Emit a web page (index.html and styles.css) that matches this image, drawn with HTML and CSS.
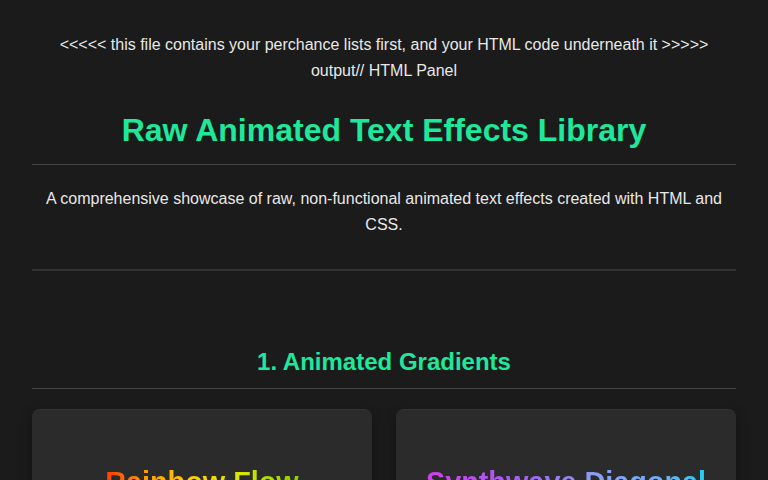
FILE: index.html
```html
<!DOCTYPE html>
<html lang="en">
<head>
<meta charset="utf-8">
<title>Raw Animated Text Effects Library</title>
<link rel="stylesheet" href="styles.css">
</head>
<body>
<div class="notice">
  <p>&lt;&lt;&lt;&lt;&lt; this file contains your perchance lists first, and your HTML code underneath it &gt;&gt;&gt;&gt;&gt;</p>
  <p>output// HTML Panel</p>
</div>
<header class="page-header">
  <h1 class="title">Raw Animated Text Effects Library</h1>
  <p class="intro">A comprehensive showcase of raw, non-functional animated text effects created with HTML and CSS.</p>
</header>
<section class="section">
  <h2 class="section-title">1. Animated Gradients</h2>
  <div class="grid">
    <div class="card">
      <div class="effect rainbow">Rainbow Flow</div>
    </div>
    <div class="card">
      <div class="effect synth">Synthwave Diagonal</div>
    </div>
  </div>
</section>
</body>
</html>
```
FILE: styles.css
```css
html, body {
  margin: 0;
  padding: 0;
  background: #1b1b1b;
  color: #e8e8e8;
  font-family: "Liberation Sans", Arial, sans-serif;
}
body {
  padding: 32px 32px 40px;
}
.notice {
  text-align: center;
  font-size: 16px;
  line-height: 26px;
}
.notice p {
  margin: 0;
}
.page-header {
  border-bottom: 2px solid #333;
  padding-bottom: 31px;
}
.title {
  margin: 27px 0 0;
  font-size: 32px;
  line-height: 38px;
  font-weight: bold;
  color: #1ee89b;
  text-align: center;
  padding-bottom: 15px;
  border-bottom: 1px solid #444;
}
.intro {
  margin: 21px 0 0;
  text-align: center;
  font-size: 16px;
  line-height: 26px;
}
.section {
  margin-top: 76px;
}
.section-title {
  margin: 0;
  font-size: 24px;
  line-height: 29px;
  font-weight: bold;
  color: #1ee89b;
  text-align: center;
  padding-bottom: 12px;
  border-bottom: 1px solid #444;
}
.grid {
  margin-top: 20px;
  display: grid;
  grid-template-columns: 1fr 1fr;
  gap: 24px;
}
.card {
  background: #2b2b2b;
  border-radius: 8px;
  border-top: 1px solid #333;
  box-shadow: 0 4px 12px rgba(0, 0, 0, 0.35);
  padding: 56px 20px 53px;
  text-align: center;
  min-height: 120px;
}
.effect {
  display: inline-block;
  font-size: 28.8px;
  font-weight: bold;
  line-height: 33px;
  -webkit-background-clip: text;
  background-clip: text;
  -webkit-text-fill-color: transparent;
  color: transparent;
}
.rainbow {
  background-image: linear-gradient(90deg, #ff3c00 0%, #ff9a00 20%, #ffd200 45%, #d8e600 70%, #8ecf00 100%);
}
.synth {
  background-image: linear-gradient(90deg, #d53cf0 0%, #a062f2 35%, #8c9df5 60%, #6fb0f3 85%, #22cdf0 100%);
}
```
